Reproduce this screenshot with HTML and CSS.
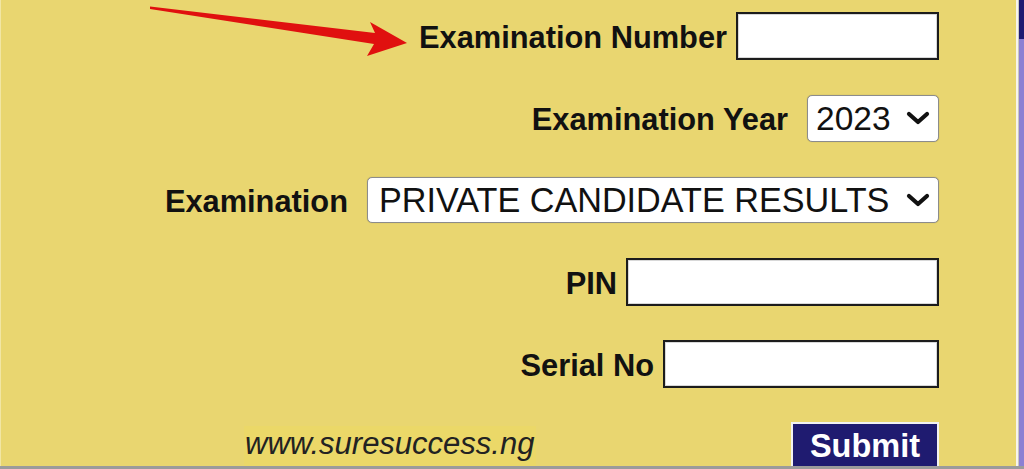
FILE: index.html
```html
<!DOCTYPE html>
<html lang="en">
<head>
<meta charset="UTF-8" />
<meta name="viewport" content="width=device-width, initial-scale=1" />
<title>Check Result</title>
<link rel="stylesheet" href="styles.css">
</head>
<body>

<div class="page">
  <div class="panel">
    <svg class="arrow" width="420" height="60" viewBox="0 0 420 60">
      <path d="M150,6.5 L375,33 L370,22 L407,43 L367,56 L374,44 L150,9 Z" fill="#e0100f" />
    </svg>

    <form class="result-form">
      <div class="row">
        <label for="examNo">Examination Number</label>
        <input type="text" id="examNo" class="field field-exam" />
      </div>

      <div class="row">
        <label for="examYear">Examination Year</label>
        <div class="select-wrap">
          <select id="examYear" class="year-select">
            <option>2023</option>
            <option>2022</option>
          </select>
          <svg class="chev" width="24" height="14" viewBox="0 0 24 14"><path d="M3,3 L12,11 L21,3" fill="none" stroke="#111" stroke-width="4.2" stroke-linecap="round" stroke-linejoin="round" /></svg>
        </div>
      </div>

      <div class="row">
        <label for="examType">Examination</label>
        <div class="select-wrap">
          <select id="examType" class="type-select">
            <option>PRIVATE CANDIDATE RESULTS</option>
            <option>SCHOOL CANDIDATE RESULTS</option>
          </select>
          <svg class="chev" width="24" height="14" viewBox="0 0 24 14"><path d="M3,3 L12,11 L21,3" fill="none" stroke="#111" stroke-width="4.2" stroke-linecap="round" stroke-linejoin="round" /></svg>
        </div>
      </div>

      <div class="row">
        <label for="pin">PIN</label>
        <input type="text" id="pin" class="field field-pin" />
      </div>

      <div class="row">
        <label for="serial">Serial No</label>
        <input type="text" id="serial" class="field field-serial" />
      </div>

      <div class="row">
        <button type="submit" class="btn-submit">Submit</button>
      </div>
    </form>

    <div class="watermark">www.suresuccess.ng</div>
  </div>
  <div class="edge"></div>
  <div class="side"></div>
</div>
<div class="bottom-line"></div>

</body>
</html>
```

FILE: styles.css
```css
body {
  margin: 0; padding: 0;
  font-family: "Liberation Sans", Arial, Helvetica, sans-serif;
  height: 469px;
  overflow: hidden;
  background: #e9d670;
  display: flex; flex-direction: column;
}
.page {
  display: flex;
  height: 466px;
}
.panel {
  position: relative;
  width: 1015px;
  background: #e9d670;
  border-left: 1px solid #f1e6a4;
  overflow: hidden;
}
.edge {
  width: 2px;
  background: #f6f4ee;
  border-right: 1px solid #c9c6c0;
}
.side {
  flex: 1;
  background: linear-gradient(#1d1b72 0, #1d1b72 39px, #8b80d3 39px);
}
.bottom-line {
  height: 3px;
  background: #9b9b9b;
}

.arrow {
  position: absolute;
  left: -1px; top: 0;
}

.result-form {
  display: flex; flex-direction: column; align-items: flex-end;
  gap: 34px;
  padding: 12px 77px 0 0;
}
.row {
  display: flex; align-items: center;
  gap: 9px;
  height: 48px;
}
.row label {
  font-weight: 700;
  font-size: 30.8px;
  color: #111;
  padding-top: 4px;
}
.field {
  box-sizing: border-box;
  height: 48px;
  margin: 0;
  border: 2px solid #1c1c1c;
  background: #fff;
  box-shadow: inset 0 0 0 1px #d8d8d8;
  font-size: 24px;
}
.field-exam { width: 203px; }
.field-pin { width: 313px; }
.field-serial { width: 276px; }

.select-wrap {
  position: relative;
  margin-left: 10px;
}
.select-wrap select {
  appearance: none;
  -webkit-appearance: none;
  box-sizing: border-box;
  display: block;
  margin: 0;
  background: #fff;
  border: 1px solid #8c8c8c;
  border-radius: 5px;
  box-shadow: 0 0 1px rgba(0,0,0,0.3);
  font-family: "Liberation Sans", Arial, Helvetica, sans-serif;
  font-size: 33.5px;
  color: #111;
  padding: 0 40px 0 8px;
}
.year-select { width: 132px; height: 47px; }
.select-wrap .type-select {
  width: 572px; height: 46px;
  padding-left: 11px;
  font-size: 34.2px;
}
.chev {
  position: absolute;
  right: 9px; top: 50%;
  margin-top: -7px;
  pointer-events: none;
}

.btn-submit {
  box-sizing: border-box;
  width: 148px; height: 50px;
  margin-top: 2px;
  background: #1f1b70;
  border: 2px solid #f2f2f2;
  border-bottom: none;
  color: #fff;
  font-family: "Liberation Sans", Arial, Helvetica, sans-serif;
  font-weight: 700;
  font-size: 32.5px;
  padding: 0 0 4px;
  cursor: pointer;
}

.watermark {
  position: absolute;
  left: 243px; top: 426px;
  padding: 0 2px 4px 1px;
  font-style: italic;
  font-size: 31px;
  color: #222;
  background: #ebd868;
}
```
